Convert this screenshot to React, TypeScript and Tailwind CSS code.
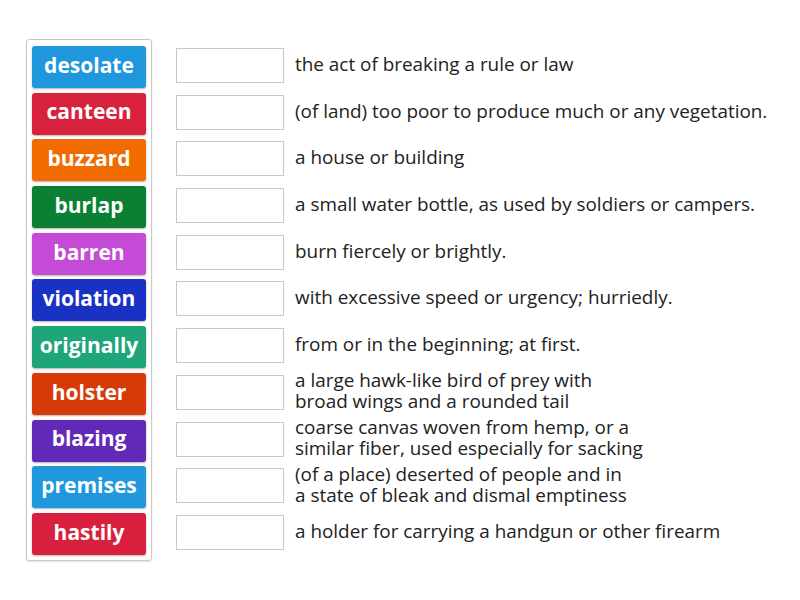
import React from "react";

const words: { w: string; c: string }[] = [
  { w: "desolate", c: "bg-[#1f97dd]" },
  { w: "canteen", c: "bg-[#d8213d]" },
  { w: "buzzard", c: "bg-[#f06c00]" },
  { w: "burlap", c: "bg-[#0b7f33]" },
  { w: "barren", c: "bg-[#c44bd6]" },
  { w: "violation", c: "bg-[#1a32c4]" },
  { w: "originally", c: "bg-[#1ea67a]" },
  { w: "holster", c: "bg-[#d63a08]" },
  { w: "blazing", c: "bg-[#6229b8]" },
  { w: "premises", c: "bg-[#1f98dd]" },
  { w: "hastily", c: "bg-[#d81f3e]" },
];

const defs: string[][] = [
  ["the act of breaking a rule or law"],
  ["(of land) too poor to produce much or any vegetation."],
  ["a house or building"],
  ["a small water bottle, as used by soldiers or campers."],
  ["burn fiercely or brightly."],
  ["with excessive speed or urgency; hurriedly."],
  ["from or in the beginning; at first."],
  ["a large hawk-like bird of prey with", "broad wings and a rounded tail"],
  ["coarse canvas woven from hemp, or a", "similar fiber, used especially for sacking"],
  ["(of a place) deserted of people and in", "a state of bleak and dismal emptiness"],
  ["a holder for carrying a handgun or other firearm"],
];

export default function App() {
  return (
    <div
      className="w-[800px] h-[600px] bg-white flex items-start pt-[39px] pl-[26px]"
      style={{ fontFamily: '"Open Sans", sans-serif' }}
    >
      <div className="w-[126px] border border-[#c8c8c8] rounded-[3px] px-[5px] pt-[6px] pb-[5px] flex flex-col gap-[4.7px] shadow-[0_1px_2px_rgba(0,0,0,0.12)]">
        {words.map((x) => (
          <div
            key={x.w}
            className={`${x.c} h-[42px] rounded-[3px] flex items-center justify-center pb-[3px] text-white font-bold text-[21px] shadow-[0_1px_2px_rgba(0,0,0,0.3)]`}
          >
            {x.w}
          </div>
        ))}
      </div>
      <div className="ml-[24px] mt-[9px] flex flex-col gap-[11.7px]">
        {defs.map((d, i) => (
          <div key={i} className="flex items-center h-[35px]">
            <div className="w-[108px] h-[35px] border border-[#c8c8c8] bg-white shrink-0" />
            <div className="ml-[11px] pb-[2px] text-[18.9px] leading-[21px] text-[#222] whitespace-nowrap">
              {d.map((l, j) => (
                <div key={j}>{l}</div>
              ))}
            </div>
          </div>
        ))}
      </div>
    </div>
  );
}
